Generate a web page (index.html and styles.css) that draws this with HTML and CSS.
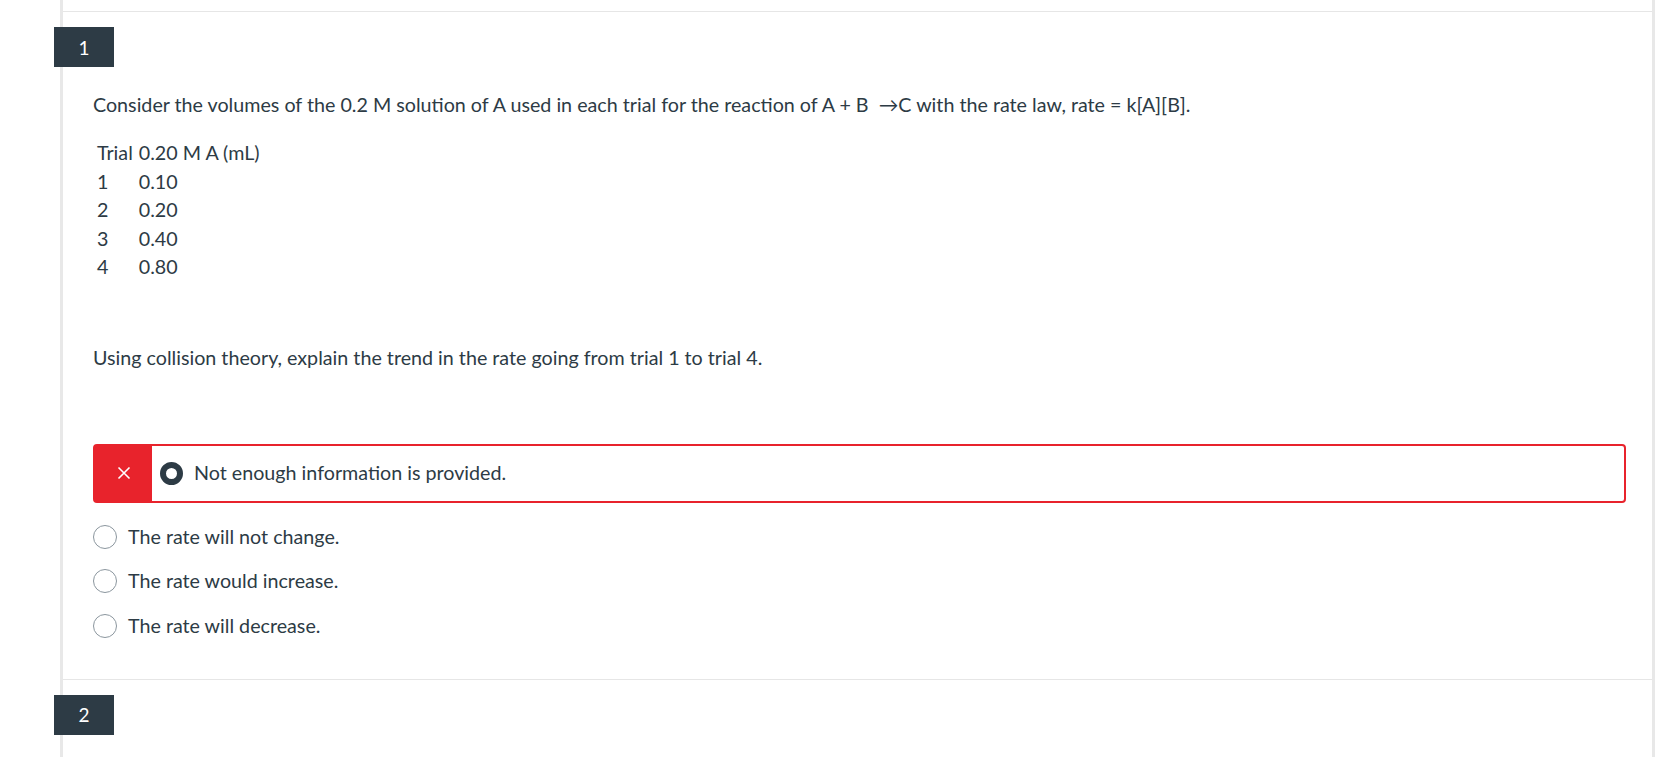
FILE: index.html
```html
<!DOCTYPE html>
<html lang="en">
<head>
<meta charset="utf-8">
<title>Quiz</title>
<link rel="stylesheet" href="styles.css">
</head>
<body>
<div class="page">
  <div class="question">
    <div class="badge">1</div>
    <p class="stem">Consider the volumes of the 0.2 M solution of A used in each trial for the reaction of A + B&nbsp; →C with the rate law, rate = k[A][B].</p>
    <table class="data">
      <tr><td>Trial</td><td>0.20 M A (mL)</td></tr>
      <tr><td>1</td><td>0.10</td></tr>
      <tr><td>2</td><td>0.20</td></tr>
      <tr><td>3</td><td>0.40</td></tr>
      <tr><td>4</td><td>0.80</td></tr>
    </table>
    <p class="ask">Using collision theory, explain the trend in the rate going from trial 1 to trial 4.</p>
    <div class="answers">
      <div class="answer wrong">
        <div class="mark">
          <svg width="14" height="14" viewBox="0 0 14 14"><path d="M1.5 1.5 L12.5 12.5 M12.5 1.5 L1.5 12.5" stroke="#fff" stroke-width="1.6" fill="none"/></svg>
        </div>
        <span class="radio checked"></span>
        <span class="label">Not enough information is provided.</span>
      </div>
      <div class="answer">
        <span class="radio"></span>
        <span class="label">The rate will not change.</span>
      </div>
      <div class="answer">
        <span class="radio"></span>
        <span class="label">The rate would increase.</span>
      </div>
      <div class="answer">
        <span class="radio"></span>
        <span class="label">The rate will decrease.</span>
      </div>
    </div>
  </div>
  <div class="question">
    <div class="badge">2</div>
  </div>
</div>
</body>
</html>
```

FILE: styles.css
```css
html, body {
  margin: 0;
  padding: 0;
  background: #ffffff;
  height: 757px;
  overflow: hidden;
}
body {
  font-family: Lato, "Open Sans", sans-serif;
  font-size: 19.7px;
  color: #2d3b45;
}
.page {
  margin-left: 60px;
  width: 1589px;
  border-left: 3px solid #e8e8e8;
  border-right: 3px solid #e8e8e8;
  padding-top: 11px;
  min-height: 757px;
}
.question {
  border-top: 1px solid #e6e6e6;
  padding: 15px 26px 39px 30px;
}
.badge {
  margin-left: -39px;
  width: 60px;
  height: 40px;
  background: #2d3b45;
  color: #ffffff;
  display: flex;
  align-items: center;
  justify-content: center;
  font-size: 19px;
}
.stem {
  margin: 24px 0 0 0;
  line-height: 28px;
}
.data {
  margin-top: 20px;
  border-collapse: collapse;
  margin-left: 2px;
}
.data td {
  padding: 0 4px 0 2px;
  line-height: 28.5px;
  height: 28.5px;
  vertical-align: middle;
}
.ask {
  margin: 62px 0 0 0;
  line-height: 28px;
}
.answers {
  margin-top: 72px;
  display: flex;
  flex-direction: column;
  gap: 16.5px;
}
.answer {
  display: flex;
  align-items: center;
  height: 28px;
}
.answer .radio {
  width: 22px;
  height: 22px;
  border: 1px solid #8b969e;
  border-radius: 50%;
  background: #fff;
  flex: none;
  margin-right: 11px;
}
.answer.wrong {
  height: 55px;
  border: 2px solid #e8232c;
  border-radius: 4px;
  margin-bottom: 3.5px;
}
.answer.wrong .mark {
  width: 57px;
  align-self: stretch;
  background: #e8232c;
  display: flex;
  align-items: center;
  justify-content: center;
  margin-right: 8px;
}
.answer .radio.checked {
  width: 11px;
  height: 11px;
  border: 6.5px solid #2d3b45;
  margin-right: 11px;
}
.label {
  line-height: 28px;
}
```
